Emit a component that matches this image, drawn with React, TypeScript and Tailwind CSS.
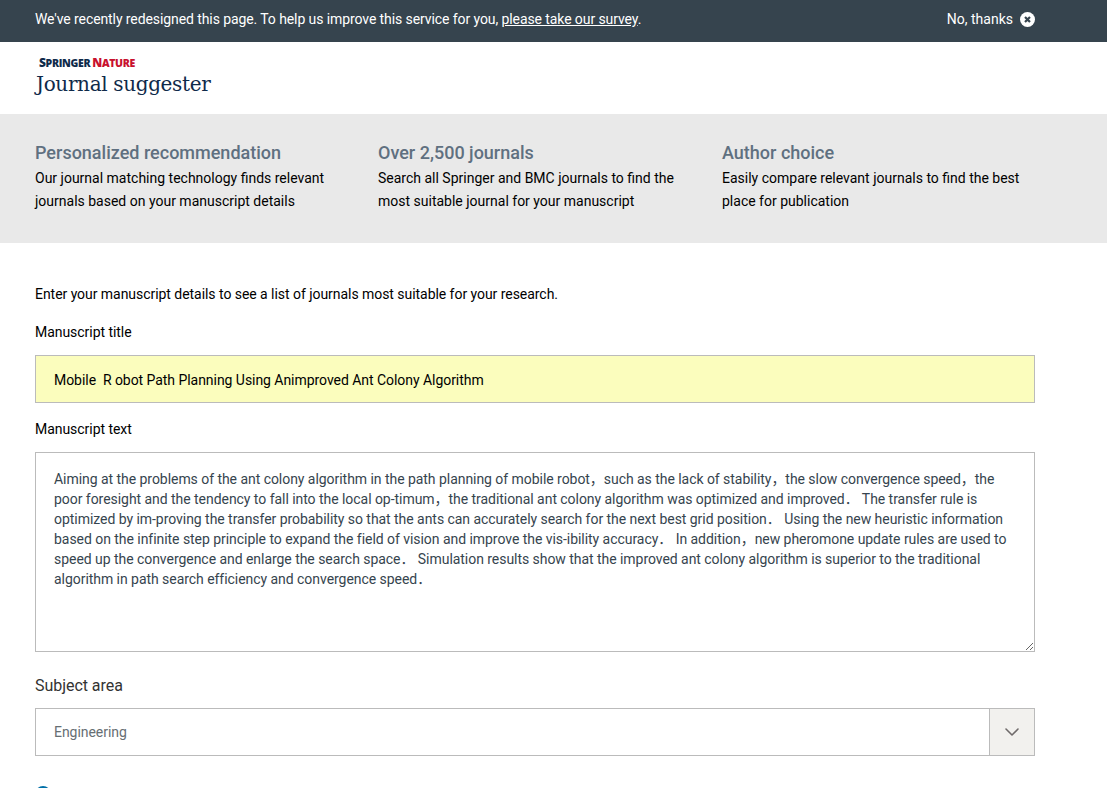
import { ChevronDown } from "lucide-react";

const roboto = "font-['Roboto','Liberation_Sans','Noto_Sans_CJK_SC',sans-serif]";

const features = [
  {
    title: "Personalized recommendation",
    lines: ["Our journal matching technology finds relevant", "journals based on your manuscript details"],
    width: "w-[343px]",
  },
  {
    title: "Over 2,500 journals",
    lines: ["Search all Springer and BMC journals to find the", "most suitable journal for your manuscript"],
    width: "w-[344px]",
  },
  {
    title: "Author choice",
    lines: ["Easily compare relevant journals to find the best", "place for publication"],
    width: "w-[340px]",
  },
];

const manuscriptText =
  "Aiming at the problems of the ant colony algorithm in the path planning of mobile robot，such as the lack of stability，the slow convergence speed，the poor foresight and the tendency to fall into the local op-timum，the traditional ant colony algorithm was optimized and improved． The transfer rule is optimized by im-proving the transfer probability so that the ants can accurately search for the next best grid position． Using the new heuristic information based on the infinite step principle to expand the field of vision and improve the vis-ibility accuracy． In addition，new pheromone update rules are used to speed up the convergence and enlarge the search space． Simulation results show that the improved ant colony algorithm is superior to the traditional algorithm in path search efficiency and convergence speed．";

export default function App() {
  return (
    <div className={`h-[788px] overflow-hidden bg-white text-[14px] text-black ${roboto}`}>
      <div className="flex h-[42px] items-center justify-between bg-[#36444e] pb-[3px] pl-[35px] pr-[72px] text-white">
        <div className="tracking-[-0.09px]">
          We've recently redesigned this page. To help us improve this service for you,{" "}
          <span className="underline">please take our survey</span>.
        </div>
        <div className="flex items-center gap-[7px]">
          <span>No, thanks</span>
          <svg width="15" height="15" viewBox="0 0 15 15">
            <circle cx="7.5" cy="7.5" r="7.5" fill="#fff" />
            <path d="M5 5l5 5M10 5l-5 5" stroke="#36444e" strokeWidth="2.2" />
          </svg>
        </div>
      </div>

      <div className="h-[72px] pl-[35px]">
        <div className="flex items-baseline pt-[14px] pl-[4px] font-['Open_Sans',sans-serif] text-[10.5px] leading-[14px] font-extrabold tracking-[-0.32px]">
          <span className="text-[#0f2a4a]">
            <span className="text-[12px]">S</span>PRINGER
          </span>
          <span className="ml-[2px] text-[#c8102e]">
            <span className="text-[12px]">N</span>ATURE
          </span>
        </div>
        <div className="pl-[1px] font-['DejaVu_Serif',serif] text-[20px] leading-[29px] tracking-[-0.35px] text-[#0f2a4a]">
          Journal suggester
        </div>
      </div>

      <div className="flex h-[129px] bg-[#e9e9e9] pl-[35px] pt-[27px]">
        {features.map((f) => (
          <div key={f.title} className={f.width}>
            <div className="mb-[2px] text-[18px] leading-[24px] font-medium text-[#5f7080]">{f.title}</div>
            {f.lines.map((l) => (
              <div key={l} className="leading-[23px]">
                {l}
              </div>
            ))}
          </div>
        ))}
      </div>

      <div className="w-[1035px] pl-[35px] pt-[41px] tracking-[-0.045px]">
        <div className="leading-[20px]">Enter your manuscript details to see a list of journals most suitable for your research.</div>

        <div className="mt-[18px] leading-[20px]">Manuscript title</div>
        <input
          readOnly
          value="Mobile  R obot Path Planning Using Animproved Ant Colony Algorithm"
          className="mt-[13px] block h-[48px] w-full border border-[#bbbbbb] bg-[#fbfdbd] px-[18px] pt-[2px] outline-none"
        />

        <div className="mt-[16px] leading-[20px]">Manuscript text</div>
        <textarea
          readOnly
          value={manuscriptText}
          className="mt-[13px] block h-[200px] w-full resize-y border border-[#bbbbbb] bg-white px-[18px] py-[16px] leading-[20px] text-[#36444e] outline-none"
        />

        <div className="mt-[23px] text-[16px] leading-[22px] text-[#333333]">Subject area</div>
        <div className="mt-[11px] flex h-[48px] border border-[#bbbbbb]">
          <div className="flex flex-1 items-center px-[18px] text-[#666e73]">Engineering</div>
          <div className="flex w-[45px] items-center justify-center border-l border-[#bbbbbb] bg-[#f2f1ee]">
            <ChevronDown size={24} strokeWidth={1.6} className="text-[#6f6a6a]" />
          </div>
        </div>

        <div className="mt-[30px] h-[16px] w-[16px] rounded-full bg-[#0070a8]" />
      </div>
    </div>
  );
}
